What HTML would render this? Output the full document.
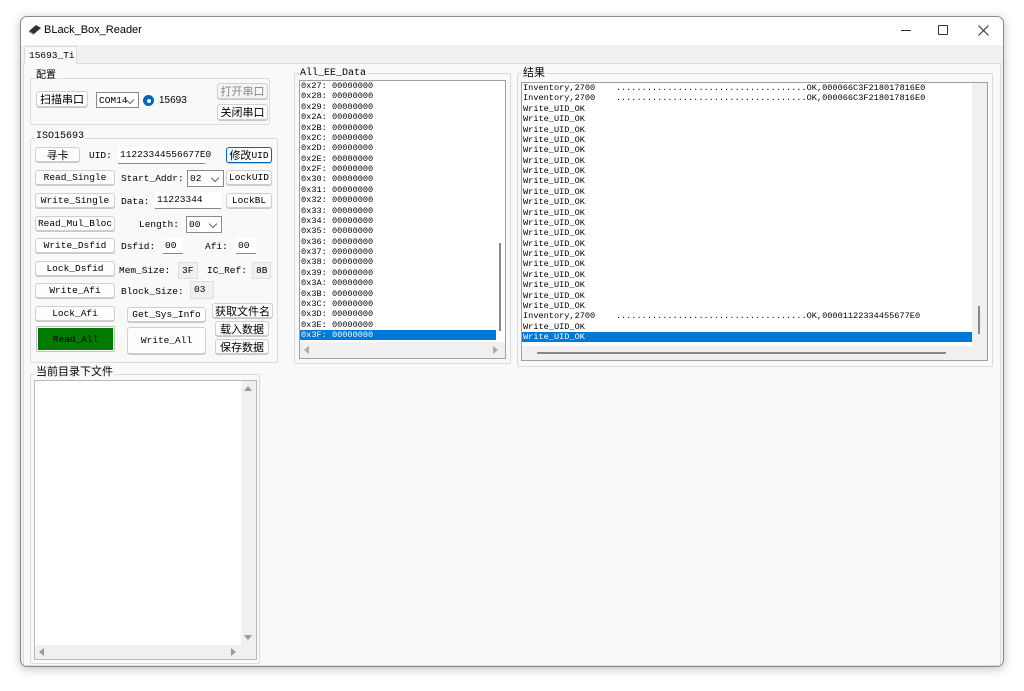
<!DOCTYPE html>
<html><head><meta charset="utf-8"><style>
*{box-sizing:border-box;margin:0;padding:0}
body{width:1024px;height:691px;background:#fff;position:relative;overflow:hidden;font-family:"Liberation Sans","Noto Sans CJK SC",sans-serif;font-size:11px;color:#000}
.a{position:absolute}
.win{left:20px;top:16px;width:984px;height:651px;border:1px solid #8a8a8a;border-radius:7px;background:#f0f0f0;box-shadow:0 2px 10px rgba(0,0,0,.25);overflow:hidden}
.title{left:0;top:0;width:100%;height:28px;background:#fff}
.panel{left:2px;top:46px;width:978px;height:603px;background:#f9f9f9;border:1px solid #dcdcdc}
.btn{position:absolute;background:#fdfdfd;border:1px solid #d0d0d0;border-radius:3px;text-align:center;font-family:"Liberation Mono","Noto Sans CJK SC",monospace;font-size:9.5px;display:flex;align-items:center;justify-content:center;box-shadow:0 1px 0 #c8c8c8}
.cn{font-family:"Liberation Sans","Noto Sans CJK SC",sans-serif;font-size:11px}
.lbl{position:absolute;font-family:"Liberation Mono","Noto Sans CJK SC",monospace;font-size:9.5px}
.box{position:absolute;background:#fff;border-bottom:1px solid #888;font-family:"Liberation Mono",monospace;font-size:9.5px;padding:2px 0 0 2px}
.gbox{position:absolute;background:#f0f0f0;border:1px solid #e0e0e0;font-family:"Liberation Mono",monospace;font-size:9.5px;padding:2px 0 0 3px}
.grp{position:absolute;border:1px solid #dcdcdc;border-radius:2px}
.gl{position:absolute;background:#f9f9f9;padding:0 1px;font-size:10px;font-family:"Liberation Mono","Noto Sans CJK SC",monospace;line-height:11px}
.combo{position:absolute;background:#fff;border:1px solid #8a8a8a;font-family:"Liberation Mono",monospace;font-size:9.5px;padding:2px 0 0 2px}
.combo:after{content:"";position:absolute;right:5px;top:4px;width:5px;height:5px;border-right:1px solid #666;border-bottom:1px solid #666;transform:rotate(45deg)}
.list{position:absolute;background:#fff;border:1px solid #a0a0a0;overflow:hidden}
.ln{font-family:"Liberation Mono",monospace;font-size:8.6px;line-height:10.375px;height:10.375px;white-space:pre;padding-left:1px}
.sel{background:#0078d7;color:#fff}
</style></head><body>
<div class="a win">
 <div class="a title">
  <svg class="a" style="left:7px;top:7px" width="14" height="12" viewBox="0 0 14 12"><path d="M1 7 L8 1 L13 4 L6 10 Z" fill="#333"/><path d="M1 7 L6 10 L6 11 L1 8Z" fill="#777"/></svg>
  <div class="a" style="left:23px;top:7px;font-size:11px">BLack_Box_Reader</div>
  <div class="a" style="left:880px;top:13px;width:10px;height:1px;background:#333"></div>
  <div class="a" style="left:917px;top:8px;width:10px;height:10px;border:1px solid #333;border-radius:1px"></div>
  <svg class="a" style="left:957px;top:8px" width="11" height="11"><path d="M0.5 0.5 L10.5 10.5 M10.5 0.5 L0.5 10.5" stroke="#333" stroke-width="1.1"/></svg>
 </div>
 <div class="a" style="left:3px;top:29px;width:53px;height:18px;background:#f9f9f9;border:1px solid #dcdcdc;border-bottom:none;font-family:'Liberation Mono',monospace;font-size:9.5px;padding:3px 0 0 4px;z-index:2">15693_Ti</div>
 <div class="a panel"></div>
</div>

<!-- 配置 -->
<div class="grp" style="left:30px;top:78px;width:240px;height:47px"></div>
<div class="gl" style="left:35px;top:71px">配置</div>
<div class="btn cn" style="left:36px;top:91px;width:52px;height:16px">扫描串口</div>
<div class="combo" style="left:96px;top:92px;width:43px;height:16px">COM14</div>
<div class="a" style="left:143px;top:95px;width:11px;height:11px;border-radius:50%;background:#0067c0"></div>
<div class="a" style="left:146.5px;top:98.5px;width:4px;height:4px;border-radius:50%;background:#fff"></div>
<div class="a" style="left:159px;top:95px;font-size:10px">15693</div>
<div class="btn cn" style="left:217px;top:83px;width:51px;height:16px;color:#888;background:#f5f5f5">打开串口</div>
<div class="btn cn" style="left:217px;top:104px;width:51px;height:16px">关闭串口</div>

<!-- ISO15693 -->
<div class="grp" style="left:30px;top:138px;width:248px;height:225px"></div>
<div class="gl" style="left:35px;top:131px">ISO15693</div>
<div class="btn cn" style="left:35px;top:147px;width:45px;height:15px">寻卡</div>
<div class="lbl" style="left:89px;top:150px">UID:</div>
<div class="box" style="left:118px;top:147px;width:87px;height:17px">11223344556677E0</div>
<div class="btn" style="left:226px;top:147px;width:46px;height:16px;border:1px solid #0067c0"><span class="cn">修改</span>UID</div>

<div class="btn" style="left:35px;top:170px;width:80px;height:15px">Read_Single</div>
<div class="lbl" style="left:121px;top:173px">Start_Addr:</div>
<div class="combo" style="left:187px;top:170px;width:37px;height:17px">02</div>
<div class="btn" style="left:226px;top:170px;width:46px;height:15px">LockUID</div>

<div class="btn" style="left:35px;top:193px;width:80px;height:15px">Write_Single</div>
<div class="lbl" style="left:121px;top:196px">Data:</div>
<div class="box" style="left:155px;top:192px;width:66px;height:17px">11223344</div>
<div class="btn" style="left:226px;top:193px;width:46px;height:15px">LockBL</div>

<div class="btn" style="left:35px;top:216px;width:80px;height:15px">Read_Mul_Bloc</div>
<div class="lbl" style="left:139px;top:219px">Length:</div>
<div class="combo" style="left:186px;top:216px;width:36px;height:17px">00</div>

<div class="btn" style="left:35px;top:238px;width:80px;height:15px">Write_Dsfid</div>
<div class="lbl" style="left:121px;top:241px">Dsfid:</div>
<div class="box" style="left:163px;top:238px;width:20px;height:16px">00</div>
<div class="lbl" style="left:205px;top:241px">Afi:</div>
<div class="box" style="left:236px;top:238px;width:20px;height:16px">00</div>

<div class="btn" style="left:35px;top:261px;width:80px;height:15px">Lock_Dsfid</div>
<div class="lbl" style="left:119px;top:265px">Mem_Size:</div>
<div class="gbox" style="left:178px;top:262px;width:20px;height:17px">3F</div>
<div class="lbl" style="left:207px;top:265px">IC_Ref:</div>
<div class="gbox" style="left:252px;top:262px;width:19px;height:17px">8B</div>

<div class="btn" style="left:35px;top:283px;width:80px;height:15px">Write_Afi</div>
<div class="lbl" style="left:121px;top:286px">Block_Size:</div>
<div class="gbox" style="left:190px;top:281px;width:24px;height:18px">03</div>

<div class="btn" style="left:35px;top:306px;width:80px;height:15px">Lock_Afi</div>
<div class="btn" style="left:127px;top:307px;width:79px;height:15px">Get_Sys_Info</div>
<div class="btn cn" style="left:212px;top:303px;width:61px;height:15px">获取文件名</div>
<div class="a" style="left:36px;top:326px;width:79px;height:26px;border:1px solid #c0c0c0;border-radius:2px;background:#fff;padding:1px"><div style="width:100%;height:100%;background:#007a00;font-family:'Liberation Mono',monospace;font-size:9.5px;display:flex;align-items:center;justify-content:center">Read_All</div></div>
<div class="btn" style="left:127px;top:327px;width:79px;height:27px">Write_All</div>
<div class="btn cn" style="left:215px;top:321px;width:54px;height:15px">载入数据</div>
<div class="btn cn" style="left:215px;top:339px;width:54px;height:15px">保存数据</div>

<!-- files -->
<div class="grp" style="left:30px;top:374px;width:230px;height:290px"></div>
<div class="gl" style="left:35px;top:367px;font-size:11px;font-family:'Liberation Sans','Noto Sans CJK SC',sans-serif">当前目录下文件</div>
<div class="list" style="left:34px;top:380px;width:223px;height:280px;border-color:#b8b8b8">
 <div class="a" style="right:0;top:0;width:15px;height:100%;background:#f0f0f0"></div>
 <div class="a" style="left:0;bottom:0;width:100%;height:14px;background:#f0f0f0"></div>
 <div class="a" style="right:4px;top:5px;border:4px solid transparent;border-bottom:5px solid #999;border-top:0"></div>
 <div class="a" style="right:4px;bottom:19px;border:4px solid transparent;border-top:5px solid #999;border-bottom:0"></div>
 <div class="a" style="left:4px;bottom:3px;border:4px solid transparent;border-right:5px solid #999;border-left:0"></div>
 <div class="a" style="left:196px;bottom:3px;border:4px solid transparent;border-left:5px solid #999;border-right:0"></div>
</div>

<!-- All_EE_Data -->
<div class="grp" style="left:294px;top:73px;width:217px;height:291px"></div>
<div class="gl" style="left:299px;top:68px">All_EE_Data</div>
<div class="list" style="left:299px;top:80px;width:207px;height:279px">
 <div style="width:196px;padding-top:0">
 <div class="ln">0x27: 00000000</div><div class="ln">0x28: 00000000</div><div class="ln">0x29: 00000000</div><div class="ln">0x2A: 00000000</div><div class="ln">0x2B: 00000000</div><div class="ln">0x2C: 00000000</div><div class="ln">0x2D: 00000000</div><div class="ln">0x2E: 00000000</div><div class="ln">0x2F: 00000000</div><div class="ln">0x30: 00000000</div><div class="ln">0x31: 00000000</div><div class="ln">0x32: 00000000</div><div class="ln">0x33: 00000000</div><div class="ln">0x34: 00000000</div><div class="ln">0x35: 00000000</div><div class="ln">0x36: 00000000</div><div class="ln">0x37: 00000000</div><div class="ln">0x38: 00000000</div><div class="ln">0x39: 00000000</div><div class="ln">0x3A: 00000000</div><div class="ln">0x3B: 00000000</div><div class="ln">0x3C: 00000000</div><div class="ln">0x3D: 00000000</div><div class="ln">0x3E: 00000000</div><div class="ln sel">0x3F: 00000000</div>
 </div>
 <div class="a" style="right:4px;top:162px;width:2px;height:88px;background:#888"></div>
 <div class="a" style="left:0;bottom:0;width:100%;height:16px;background:#f0f0f0"></div>
 <div class="a" style="left:4px;bottom:4px;border:4px solid transparent;border-right:5px solid #aaa;border-left:0"></div>
 <div class="a" style="left:193px;bottom:4px;border:4px solid transparent;border-left:5px solid #aaa;border-right:0"></div>
</div>

<!-- 结果 -->
<div class="grp" style="left:517px;top:73px;width:476px;height:294px"></div>
<div class="gl" style="left:522px;top:68px;font-size:11px;font-family:'Liberation Sans','Noto Sans CJK SC',sans-serif">结果</div>
<div class="list" style="left:521px;top:82px;width:467px;height:279px">
 <div style="width:452px">
 <div class="ln">Inventory,2700    .....................................OK,000066C3F218017816E0</div>
 <div class="ln">Inventory,2700    .....................................OK,000066C3F218017816E0</div>
 <div class="ln">Write_UID_OK</div><div class="ln">Write_UID_OK</div><div class="ln">Write_UID_OK</div><div class="ln">Write_UID_OK</div><div class="ln">Write_UID_OK</div><div class="ln">Write_UID_OK</div><div class="ln">Write_UID_OK</div><div class="ln">Write_UID_OK</div><div class="ln">Write_UID_OK</div><div class="ln">Write_UID_OK</div><div class="ln">Write_UID_OK</div><div class="ln">Write_UID_OK</div><div class="ln">Write_UID_OK</div><div class="ln">Write_UID_OK</div><div class="ln">Write_UID_OK</div><div class="ln">Write_UID_OK</div><div class="ln">Write_UID_OK</div><div class="ln">Write_UID_OK</div><div class="ln">Write_UID_OK</div><div class="ln">Write_UID_OK</div>
 <div class="ln">Inventory,2700    .....................................OK,00001122334455677E0</div>
 <div class="ln">Write_UID_OK</div>
 <div class="ln sel">Write_UID_OK</div>
 </div>
 <div class="a" style="right:0;top:0;width:15px;height:100%;background:#f0f0f0"></div>
 <div class="a" style="right:7px;top:223px;width:2px;height:28px;background:#888"></div>
 <div class="a" style="left:0;bottom:0;width:100%;height:14px;background:#f0f0f0"></div>
 <div class="a" style="left:15px;bottom:6px;width:409px;height:2px;background:#888"></div>
</div>
</body></html>
